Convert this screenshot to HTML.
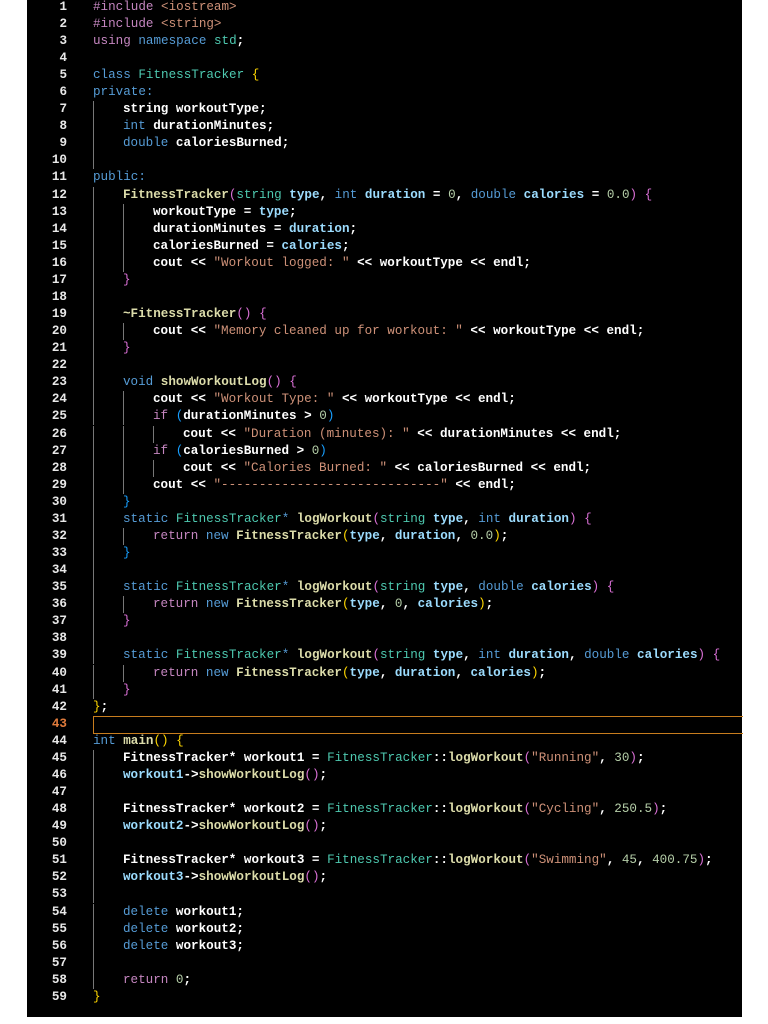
<!DOCTYPE html>
<html><head><meta charset="utf-8"><style>
html,body{margin:0;padding:0;background:#fff;width:768px;height:1024px;overflow:hidden}
#ed{position:absolute;left:27px;top:0;width:715px;height:1017px;background:#000}
.l{position:absolute;left:0;height:17px;line-height:17px;white-space:pre;font-family:"Liberation Mono",monospace;font-size:12.6px;font-weight:bold;color:#fff}
.n{position:absolute;width:40px;text-align:right;left:0;color:#e8e8e8}
.c{position:absolute;left:66px}
.g,.s{display:inline-block;width:30px;height:17px;vertical-align:top}
.g{box-shadow:inset 1px 0 0 #777}
.p{color:#c586c0;font-weight:normal}.k{color:#569cd6;font-weight:normal}.t{color:#4ec9b0;font-weight:normal}
.f{color:#dcdcaa}.a{color:#9cdcfe}.m{color:#b5cea8;font-weight:normal}.r{color:#ce9178;font-weight:normal}
.y{color:#ffd700;font-weight:normal}.q{color:#da70d6;font-weight:normal}.b{color:#179fff;font-weight:normal}
#hl{position:absolute;left:66px;top:716px;width:649px;height:16px;border:1px solid #c87d1e;border-right:none}
</style></head><body><div id="ed">
<div id="hl"></div>
<div class="l" style="top:-1px"><span class="n">1</span><span class="c"><span class="p">#include</span> <span class="r">&lt;iostream&gt;</span></span></div>
<div class="l" style="top:16px"><span class="n">2</span><span class="c"><span class="p">#include</span> <span class="r">&lt;string&gt;</span></span></div>
<div class="l" style="top:33px"><span class="n">3</span><span class="c"><span class="p">using</span> <span class="k">namespace</span> <span class="t">std</span>;</span></div>
<div class="l" style="top:50px"><span class="n">4</span></div>
<div class="l" style="top:67px"><span class="n">5</span><span class="c"><span class="k">class</span> <span class="t">FitnessTracker</span> <span class="y">{</span></span></div>
<div class="l" style="top:84px"><span class="n">6</span><span class="c"><span class="k">private:</span></span></div>
<div class="l" style="top:101px"><span class="n">7</span><span class="c"><span class="g"></span>string workoutType;</span></div>
<div class="l" style="top:118px"><span class="n">8</span><span class="c"><span class="g"></span><span class="k">int</span> durationMinutes;</span></div>
<div class="l" style="top:135px"><span class="n">9</span><span class="c"><span class="g"></span><span class="k">double</span> caloriesBurned;</span></div>
<div class="l" style="top:152px"><span class="n">10</span><span class="c"><span class="g"></span></span></div>
<div class="l" style="top:169px"><span class="n">11</span><span class="c"><span class="k">public:</span></span></div>
<div class="l" style="top:187px"><span class="n">12</span><span class="c"><span class="g"></span><span class="f">FitnessTracker</span><span class="q">(</span><span class="t">string</span> <span class="a">type</span>, <span class="k">int</span> <span class="a">duration</span> = <span class="m">0</span>, <span class="k">double</span> <span class="a">calories</span> = <span class="m">0.0</span><span class="q">)</span> <span class="q">{</span></span></div>
<div class="l" style="top:204px"><span class="n">13</span><span class="c"><span class="g"></span><span class="g"></span>workoutType = <span class="a">type</span>;</span></div>
<div class="l" style="top:221px"><span class="n">14</span><span class="c"><span class="g"></span><span class="g"></span>durationMinutes = <span class="a">duration</span>;</span></div>
<div class="l" style="top:238px"><span class="n">15</span><span class="c"><span class="g"></span><span class="g"></span>caloriesBurned = <span class="a">calories</span>;</span></div>
<div class="l" style="top:255px"><span class="n">16</span><span class="c"><span class="g"></span><span class="g"></span>cout &lt;&lt; <span class="r">"Workout logged: "</span> &lt;&lt; workoutType &lt;&lt; endl;</span></div>
<div class="l" style="top:272px"><span class="n">17</span><span class="c"><span class="g"></span><span class="q">}</span></span></div>
<div class="l" style="top:289px"><span class="n">18</span><span class="c"><span class="g"></span></span></div>
<div class="l" style="top:306px"><span class="n">19</span><span class="c"><span class="g"></span><span class="f">~FitnessTracker</span><span class="q">()</span> <span class="q">{</span></span></div>
<div class="l" style="top:323px"><span class="n">20</span><span class="c"><span class="g"></span><span class="g"></span>cout &lt;&lt; <span class="r">"Memory cleaned up for workout: "</span> &lt;&lt; workoutType &lt;&lt; endl;</span></div>
<div class="l" style="top:340px"><span class="n">21</span><span class="c"><span class="g"></span><span class="q">}</span></span></div>
<div class="l" style="top:357px"><span class="n">22</span><span class="c"><span class="g"></span></span></div>
<div class="l" style="top:374px"><span class="n">23</span><span class="c"><span class="g"></span><span class="k">void</span> <span class="f">showWorkoutLog</span><span class="q">()</span> <span class="q">{</span></span></div>
<div class="l" style="top:391px"><span class="n">24</span><span class="c"><span class="g"></span><span class="g"></span>cout &lt;&lt; <span class="r">"Workout Type: "</span> &lt;&lt; workoutType &lt;&lt; endl;</span></div>
<div class="l" style="top:408px"><span class="n">25</span><span class="c"><span class="g"></span><span class="g"></span><span class="p">if</span> <span class="b">(</span>durationMinutes &gt; <span class="m">0</span><span class="b">)</span></span></div>
<div class="l" style="top:426px"><span class="n">26</span><span class="c"><span class="g"></span><span class="g"></span><span class="g"></span>cout &lt;&lt; <span class="r">"Duration (minutes): "</span> &lt;&lt; durationMinutes &lt;&lt; endl;</span></div>
<div class="l" style="top:443px"><span class="n">27</span><span class="c"><span class="g"></span><span class="g"></span><span class="p">if</span> <span class="b">(</span>caloriesBurned &gt; <span class="m">0</span><span class="b">)</span></span></div>
<div class="l" style="top:460px"><span class="n">28</span><span class="c"><span class="g"></span><span class="g"></span><span class="g"></span>cout &lt;&lt; <span class="r">"Calories Burned: "</span> &lt;&lt; caloriesBurned &lt;&lt; endl;</span></div>
<div class="l" style="top:477px"><span class="n">29</span><span class="c"><span class="g"></span><span class="g"></span>cout &lt;&lt; <span class="r">"-----------------------------"</span> &lt;&lt; endl;</span></div>
<div class="l" style="top:494px"><span class="n">30</span><span class="c"><span class="g"></span><span class="b">}</span></span></div>
<div class="l" style="top:511px"><span class="n">31</span><span class="c"><span class="g"></span><span class="k">static</span> <span class="t">FitnessTracker</span><span class="k">*</span> <span class="f">logWorkout</span><span class="q">(</span><span class="t">string</span> <span class="a">type</span>, <span class="k">int</span> <span class="a">duration</span><span class="q">)</span> <span class="q">{</span></span></div>
<div class="l" style="top:528px"><span class="n">32</span><span class="c"><span class="g"></span><span class="g"></span><span class="p">return</span> <span class="k">new</span> <span class="f">FitnessTracker</span><span class="y">(</span><span class="a">type</span>, <span class="a">duration</span>, <span class="m">0.0</span><span class="y">)</span>;</span></div>
<div class="l" style="top:545px"><span class="n">33</span><span class="c"><span class="g"></span><span class="b">}</span></span></div>
<div class="l" style="top:562px"><span class="n">34</span><span class="c"><span class="g"></span></span></div>
<div class="l" style="top:579px"><span class="n">35</span><span class="c"><span class="g"></span><span class="k">static</span> <span class="t">FitnessTracker</span><span class="k">*</span> <span class="f">logWorkout</span><span class="q">(</span><span class="t">string</span> <span class="a">type</span>, <span class="k">double</span> <span class="a">calories</span><span class="q">)</span> <span class="q">{</span></span></div>
<div class="l" style="top:596px"><span class="n">36</span><span class="c"><span class="g"></span><span class="g"></span><span class="p">return</span> <span class="k">new</span> <span class="f">FitnessTracker</span><span class="y">(</span><span class="a">type</span>, <span class="m">0</span>, <span class="a">calories</span><span class="y">)</span>;</span></div>
<div class="l" style="top:613px"><span class="n">37</span><span class="c"><span class="g"></span><span class="q">}</span></span></div>
<div class="l" style="top:630px"><span class="n">38</span><span class="c"><span class="g"></span></span></div>
<div class="l" style="top:647px"><span class="n">39</span><span class="c"><span class="g"></span><span class="k">static</span> <span class="t">FitnessTracker</span><span class="k">*</span> <span class="f">logWorkout</span><span class="q">(</span><span class="t">string</span> <span class="a">type</span>, <span class="k">int</span> <span class="a">duration</span>, <span class="k">double</span> <span class="a">calories</span><span class="q">)</span> <span class="q">{</span></span></div>
<div class="l" style="top:665px"><span class="n">40</span><span class="c"><span class="g"></span><span class="g"></span><span class="p">return</span> <span class="k">new</span> <span class="f">FitnessTracker</span><span class="y">(</span><span class="a">type</span>, <span class="a">duration</span>, <span class="a">calories</span><span class="y">)</span>;</span></div>
<div class="l" style="top:682px"><span class="n">41</span><span class="c"><span class="g"></span><span class="q">}</span></span></div>
<div class="l" style="top:699px"><span class="n">42</span><span class="c"><span class="y">}</span>;</span></div>
<div class="l" style="top:716px"><span class="n" style="color:#e07b3c">43</span></div>
<div class="l" style="top:733px"><span class="n">44</span><span class="c"><span class="k">int</span> <span class="f">main</span><span class="y">()</span> <span class="y">{</span></span></div>
<div class="l" style="top:750px"><span class="n">45</span><span class="c"><span class="g"></span>FitnessTracker* workout1 = <span class="t">FitnessTracker</span>::<span class="f">logWorkout</span><span class="q">(</span><span class="r">"Running"</span>, <span class="m">30</span><span class="q">)</span>;</span></div>
<div class="l" style="top:767px"><span class="n">46</span><span class="c"><span class="g"></span><span class="a">workout1</span>-&gt;<span class="f">showWorkoutLog</span><span class="q">()</span>;</span></div>
<div class="l" style="top:784px"><span class="n">47</span><span class="c"><span class="g"></span></span></div>
<div class="l" style="top:801px"><span class="n">48</span><span class="c"><span class="g"></span>FitnessTracker* workout2 = <span class="t">FitnessTracker</span>::<span class="f">logWorkout</span><span class="q">(</span><span class="r">"Cycling"</span>, <span class="m">250.5</span><span class="q">)</span>;</span></div>
<div class="l" style="top:818px"><span class="n">49</span><span class="c"><span class="g"></span><span class="a">workout2</span>-&gt;<span class="f">showWorkoutLog</span><span class="q">()</span>;</span></div>
<div class="l" style="top:835px"><span class="n">50</span><span class="c"><span class="g"></span></span></div>
<div class="l" style="top:852px"><span class="n">51</span><span class="c"><span class="g"></span>FitnessTracker* workout3 = <span class="t">FitnessTracker</span>::<span class="f">logWorkout</span><span class="q">(</span><span class="r">"Swimming"</span>, <span class="m">45</span>, <span class="m">400.75</span><span class="q">)</span>;</span></div>
<div class="l" style="top:869px"><span class="n">52</span><span class="c"><span class="g"></span><span class="a">workout3</span>-&gt;<span class="f">showWorkoutLog</span><span class="q">()</span>;</span></div>
<div class="l" style="top:886px"><span class="n">53</span><span class="c"><span class="g"></span></span></div>
<div class="l" style="top:904px"><span class="n">54</span><span class="c"><span class="g"></span><span class="k">delete</span> workout1;</span></div>
<div class="l" style="top:921px"><span class="n">55</span><span class="c"><span class="g"></span><span class="k">delete</span> workout2;</span></div>
<div class="l" style="top:938px"><span class="n">56</span><span class="c"><span class="g"></span><span class="k">delete</span> workout3;</span></div>
<div class="l" style="top:955px"><span class="n">57</span><span class="c"><span class="g"></span></span></div>
<div class="l" style="top:972px"><span class="n">58</span><span class="c"><span class="g"></span><span class="p">return</span> <span class="m">0</span>;</span></div>
<div class="l" style="top:989px"><span class="n">59</span><span class="c"><span class="y">}</span></span></div>
</div></body></html>
